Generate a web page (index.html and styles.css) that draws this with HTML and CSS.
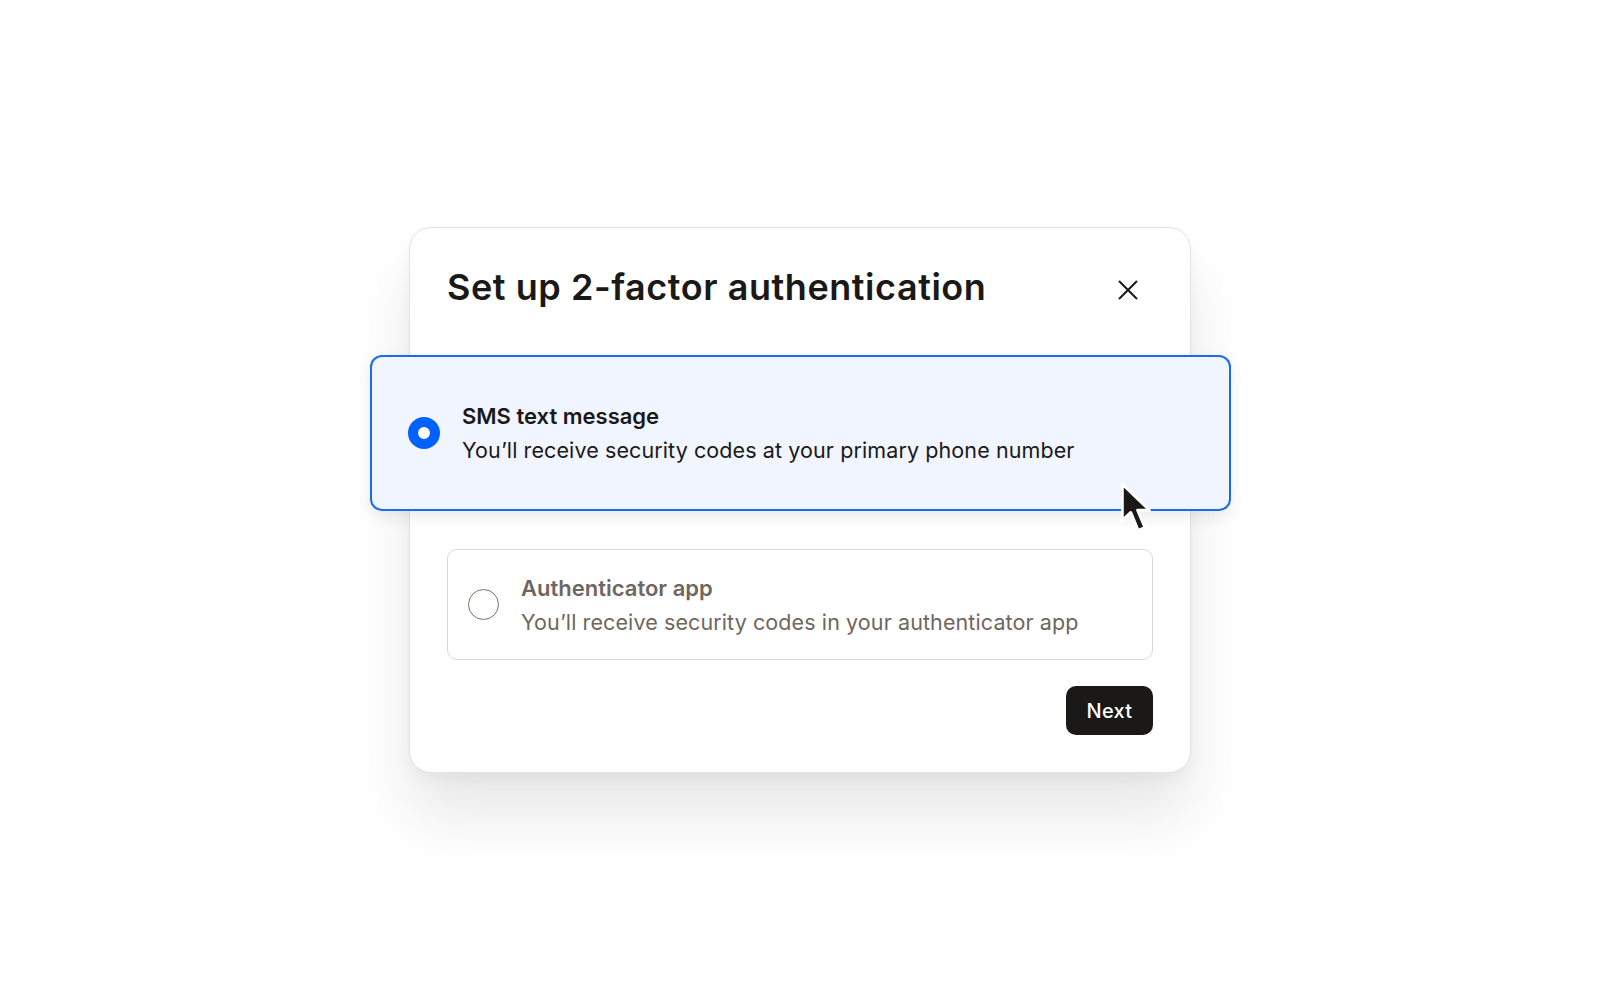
FILE: index.html
```html
<!DOCTYPE html>
<html lang="en">
<head>
  <meta charset="UTF-8">
  <title>Set up 2-factor authentication</title>
  <link rel="stylesheet" href="styles.css">
</head>
<body>
  <div class="stage">
    <div class="modal">
      <div class="modal-head">
        <h1>Set up 2-factor authentication</h1>
        <button class="close" aria-label="Close">
          <svg width="20" height="20" viewBox="0 0 20 20"><path d="M1 1 L19 19 M19 1 L1 19" stroke="#1a1918" stroke-width="2" fill="none"/></svg>
        </button>
      </div>

      <label class="option option-active">
        <span class="radio radio-on"></span>
        <span class="option-text">
          <span class="option-title">SMS text message</span>
          <span class="option-desc">You’ll receive security codes at your primary phone number</span>
        </span>
        <svg class="cursor" width="34" height="54" viewBox="0 0 30 48">
          <path d="M2 2 L2 34 L9.5 27 L16 43 L22 40.5 L15.5 25 L26 25 Z" fill="#1a1918" stroke="#fff" stroke-width="2.5" stroke-linejoin="round"/>
        </svg>
      </label>

      <label class="option">
        <span class="radio"></span>
        <span class="option-text">
          <span class="option-title">Authenticator app</span>
          <span class="option-desc">You’ll receive security codes in your authenticator app</span>
        </span>
      </label>

      <div class="actions">
        <button class="btn-next">Next</button>
      </div>
    </div>
  </div>
</body>
</html>
```

FILE: styles.css
```css
body {
  margin: 0;
  padding: 0;
  background-color: #fff;
  font-family: Inter, 'Liberation Sans', sans-serif;
  color: #1a1918;
}
.stage {
  height: 1000px;
  display: flex;
  align-items: center;
  justify-content: center;
}
.modal {
  width: 782px;
  box-sizing: border-box;
  padding: 34px 37px 37px 37px;
  background-color: #fff;
  border: 1.5px solid #e2e2e2;
  border-radius: 22px;
  box-shadow: 0 44px 60px rgba(0, 0, 0, 0.09), 0 8px 16px rgba(0, 0, 0, 0.04);
}
.modal-head {
  display: flex;
  align-items: center;
  justify-content: space-between;
  height: 50px;
  margin-bottom: 43px;
}
h1 {
  margin: 0;
  font-size: 36px;
  font-weight: 600;
  letter-spacing: 0.55px;
}
.close {
  background: none;
  border: none;
  padding: 0;
  margin: 6px 15px 0 0;
  width: 20px;
  height: 20px;
  cursor: pointer;
}
.option {
  position: relative;
  display: flex;
  align-items: center;
  height: 111px;
  box-sizing: border-box;
  padding: 0 20px;
  border: 1.5px solid #d9d7d5;
  border-radius: 10px;
  color: #6f6661;
}
.option-active {
  height: 156px;
  margin: 0 -78px 38px -77px;
  padding: 0 36px;
  border: 2px solid #1a6af5;
  border-radius: 12px;
  background-color: #f0f5ff;
  color: #1a1918;
  box-shadow: 0 6px 16px rgba(0, 0, 0, 0.08);
}
.radio {
  flex: none;
  width: 31px;
  height: 31px;
  box-sizing: border-box;
  border: 1.5px solid #7d726a;
  border-radius: 50%;
  margin-right: 22px;
}
.radio-on {
  width: 32px;
  height: 32px;
  border: 10px solid #0061fe;
  background-color: #fff;
}
.option-text {
  display: flex;
  flex-direction: column;
  gap: 8px;
}
.option-title {
  font-size: 22px;
  font-weight: 600;
  line-height: 26px;
}
.option-desc {
  font-size: 21.5px;
  letter-spacing: 0.1px;
  line-height: 26px;
}
.cursor {
  position: absolute;
  left: 748px;
  top: 125px;
}
.actions {
  display: flex;
  justify-content: flex-end;
  margin-top: 26px;
}
.btn-next {
  background-color: #1a1918;
  color: #fff;
  border: none;
  border-radius: 10px;
  width: 87px;
  height: 49px;
  font-family: Inter, sans-serif;
  font-size: 20px;
  font-weight: 500;
  letter-spacing: 0.3px;
  cursor: pointer;
}
```
